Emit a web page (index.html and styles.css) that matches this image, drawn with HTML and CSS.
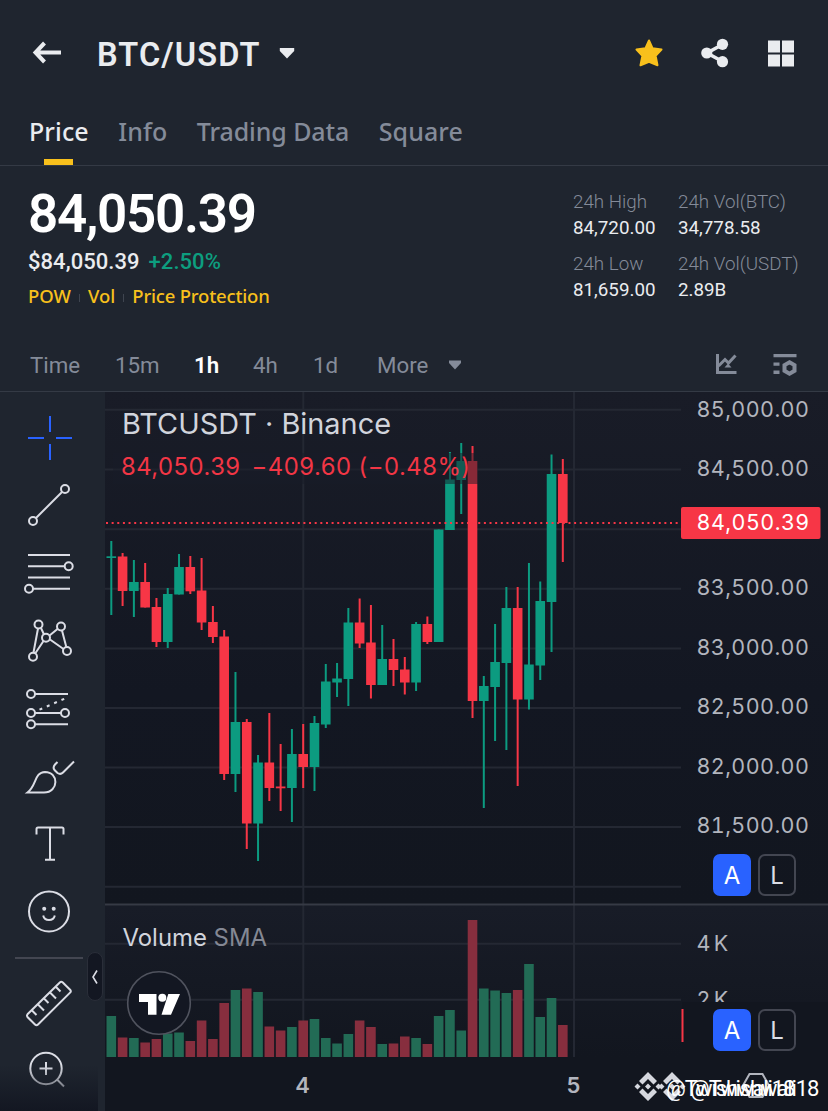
FILE: index.html
```
<!DOCTYPE html>
<html lang="en">
<head>
  <meta charset="UTF-8">
  <meta name="viewport" content="width=device-width, initial-scale=1.0">
  <title>BTC/USDT</title>
  <link rel="stylesheet" href="styles.css">
</head>
<body>
  <header class="topbar">
    <svg class="back" width="30" height="24" viewBox="0 0 30 24"><path d="M12.500 2 3.500 11.500 12.500 21M4 11.500H29" /></svg>
    <h1 class="pair">BTC/USDT</h1>
    <svg class="pair-caret" width="16" height="12" viewBox="0 0 16 12"><path d="M0.800 1H15.200V4L8 11.500 0.800 4Z" /></svg>
    <div class="actions">
      <svg width="30" height="30" viewBox="0 0 30 30"><path class="star" d="M15 2.500 18.500 10.200 27.500 11.500 21.600 17.800 23.500 27.300 15 23.800 6.500 27.300 8.400 17.800 2.500 11.500 11.500 10.200Z" /></svg>
      <svg width="30" height="30" viewBox="0 0 30 30"><path d="M22.500 6.500 7 15 22.500 23.500" fill="none" stroke="#eaecef" stroke-width="3.500" /><g fill="#eaecef"><circle cx="22.500" cy="6.300" r="5.600" /><circle cx="6.800" cy="15" r="5.600" /><circle cx="22.500" cy="23.700" r="5.600" /></g></svg>
      <svg width="30" height="30" viewBox="0 0 30 30"><path fill="#eaecef" d="M2 2.500h12v12H2zM16 2.500h12v12H16zM2 16.500h12v12H2zM16 16.500h12v12H16z" /></svg>
    </div>
  </header>

  <nav class="tabs">
    <a class="tab active">Price</a>
    <a class="tab">Info</a>
    <a class="tab tab-data">Trading Data</a>
    <a class="tab">Square</a>
  </nav>

  <section class="summary">
    <div class="quote">
      <div class="last-price">84,050.39</div>
      <div class="fiat"><span>$84,050.39</span><span class="change">+2.50%</span></div>
      <div class="tags"><span>POW</span><i></i><span>Vol</span><i></i><span class="tag-protect">Price Protection</span></div>
    </div>
    <dl class="stats">
      <div><dt>24h High</dt><dd>84,720.00</dd></div>
      <div><dt>24h Vol(BTC)</dt><dd>34,778.58</dd></div>
      <div><dt>24h Low</dt><dd>81,659.00</dd></div>
      <div><dt>24h Vol(USDT)</dt><dd>2.89B</dd></div>
    </dl>
  </section>

  <div class="intervals">
    <span class="iv-time">Time</span>
    <span class="iv-15m">15m</span>
    <span class="iv-1h active">1h</span>
    <span class="iv-4h">4h</span>
    <span class="iv-1d">1d</span>
    <span class="iv-more">More</span>
    <svg class="more-caret" width="14" height="10" viewBox="0 0 14 10"><path d="M1 0.500H13V3L7 9.500 1 3Z" /></svg>
    <svg class="indicator" width="24" height="24" viewBox="0 0 24 24"><path d="M3.500 1V19.500H22.500M4.500 13 11 6.500 14.500 10 21.500 2.500" fill="none" stroke="#848b99" stroke-width="3" /><path d="M14 10.500 17.500 14.500H10.500Z" fill="#848b99" /></svg>
    <svg class="settings" width="26" height="24" viewBox="0 0 26 24"><path fill="#848b99" d="M1.500 1h23v3.200h-23zM1.500 9.500h6v3.200h-6zM1.500 17.500h6v3.500h-6z" /><path fill="none" stroke="#848b99" stroke-width="4" d="M17.500 9.200 22.500 12.100V17.800L17.500 20.700 12.500 17.800V12.100Z" /></svg>
  </div>

  <main class="workspace">
    <aside class="tools">
      <svg class="tool cross" viewBox="0 0 98 68"><path d="M50 12V28M50 40V56M28 34H44M56 34H72" /></svg>
      <svg class="tool" viewBox="0 0 98 68"><path d="M36 46 62 20" /><circle cx="65" cy="17" r="4" /><circle cx="33" cy="49" r="4" /></svg>
      <svg class="tool" viewBox="0 0 98 68"><path d="M28 15H70M28 26.200H64.500M28 37.500H70M33 48.700H70" /><circle cx="68.700" cy="26.200" r="4" /><circle cx="29" cy="48.700" r="4" /></svg>
      <svg class="tool" viewBox="0 0 98 68"><path d="M38 20.500 33.500 44.500M41 20 44 26.500M49.500 27.500 57.500 21M62 22.500 66.300 39M50 31.500 63.500 41M43.500 33 35.500 45" /><circle cx="38.500" cy="16.500" r="4" /><circle cx="61" cy="18.500" r="4" /><circle cx="46" cy="29.700" r="4" /><circle cx="67" cy="43" r="4" /><circle cx="33" cy="48.700" r="4" /></svg>
      <svg class="tool" viewBox="0 0 98 68"><path d="M35 18H68M35 37H61M35 48.200H68" /><path d="M39.500 33.700 66 22" stroke-dasharray="3 5" /><circle cx="31" cy="18" r="4" /><circle cx="31" cy="37" r="4" /><circle cx="65" cy="37" r="4" /><circle cx="31" cy="48.200" r="4" /></svg>
      <svg class="tool" viewBox="0 0 98 68"><path d="M27.500 48.500C37 41 34 28.500 45 28 59 28 59 48.500 44 48.500ZM57.500 18 55 20.500Q52.500 23.500 54.500 26L57.500 29Q60.500 31 63 28.500L74 17.500" /></svg>
      <svg class="tool" viewBox="0 0 98 68"><path d="M36.500 22.500V17Q36.500 15.500 38 15.500H62Q63.500 15.500 63.500 17V22.500M50 15.500V47.700M45 47.700H55" /></svg>
      <svg class="tool" viewBox="0 0 98 68"><circle cx="49" cy="31.500" r="20" /><path d="M43.200 35.500C44.500 41.500 53.500 41.500 54.800 35.500" /><circle class="dot" cx="44.200" cy="28.800" r="2" /><circle class="dot" cx="53.700" cy="28.800" r="2" /></svg>
      <hr class="tool-divider">
      <svg class="tool" viewBox="0 0 98 68"><path d="M59.800 12.500Q61.300 11 62.800 12.500L70.300 20Q71.300 21.200 70.300 22.400L38 54.500Q36.500 56 35 54.500L27.500 47Q26.500 45.500 27.500 44.300ZM32 40.500 36.500 45M38 34.500 44 40.500M44 28.500 48.500 33M50 22.500 56 28.500M56 17 60.500 21.500" /></svg>
      <svg class="tool last" viewBox="0 0 98 68"><circle cx="46" cy="32.500" r="15.700" /><path d="M39.500 32.500H52.500M46 26V39M57 43.500 64 50.500" /></svg>
      <div class="tools-fade"></div>
      <div class="collapse"><svg width="8" height="16" viewBox="0 0 8 16"><path d="M6 1.500 2 8 6 14.500" /></svg></div>
    </aside>

    <section class="chart">
      <svg class="plot" viewBox="105 392 723 719">
        <g id="grid"></g>
        <g id="volume"></g>
        <g id="candles"></g>
        <rect class="veil" x="113" y="453" width="365" height="31" />
        <path class="last-line" d="M106 523H681" />
        <path class="pane-line" d="M105 904.500H828" />
        <g id="prices" class="axis"></g>
        <g class="axis">
          <text x="696.500" y="951">4<tspan dx="3">K</tspan></text>
          <text x="696.500" y="1007">2<tspan dx="3">K</tspan></text>
        </g>
        <rect class="axis-cover" x="682" y="1002" width="146" height="109" />
        <path class="vol-mark" d="M682.500 1009V1042" />
        <rect class="last-tag" x="681" y="507" width="139.500" height="32" rx="2" />
        <text class="last-text" x="696.500" y="530">84,050.39</text>
        <g class="days"><text x="302.500" y="1093">4</text><text x="573.500" y="1093">5</text></g>
        <g class="tv">
          <circle cx="159" cy="1003" r="31.300" />
          <path d="M139 994H156.500V1014.700H148V1002H139ZM168.300 994H180L171 1014.700H161.500Z" />
          <circle class="tv-dot" cx="162.300" cy="997.700" r="4" />
        </g>
        <g class="watermark">
          <g id="diamond"><path d="M639 1081 648 1072 657 1081 653.500 1084.500 648 1079 642.500 1084.500ZM639 1092 648 1101 657 1092 653.500 1088.500 648 1094 642.500 1088.500ZM648 1083.500 651 1086.500 648 1089.500 645 1086.500ZM637.500 1083.500 640.500 1086.500 637.500 1089.500 634.500 1086.500ZM658.500 1083.500 661.500 1086.500 658.500 1089.500 655.500 1086.500Z" /></g>
          <use href="#diamond" x="24" />
          <path class="hex" d="M749.500 1074H762.500L769 1085.500 762.500 1097H749.500L743 1085.500Z" />
          <text x="666" y="1096">@Twishwali18</text>
          <text x="690" y="1096">@Twishwali18</text>
        </g>
      </svg>
      <div class="legend">
        <div class="symbol">BTCUSDT · Binance</div>
        <div class="values"><span>84,050.39</span><span>−409.60 (−0.48%)</span></div>
      </div>
      <div class="volume-legend">Volume <span>SMA</span></div>
      <div class="scale-buttons upper"><b>A</b><b>L</b></div>
      <div class="scale-buttons lower"><b>A</b><b>L</b></div>
    </section>
  </main>

  <script src="chart.js"></script>
</body>
</html>
```
FILE: styles.css
```
* {
  box-sizing: border-box;
}
body {
  margin: 0;
  width: 828px;
  height: 1111px;
  overflow: hidden;
  background: #1f252f;
  color: #eaecef;
  font-family: Roboto, "Liberation Sans", sans-serif;
}
svg {
  display: block;
  flex: none;
}

/* header */
.topbar {
  display: flex;
  align-items: center;
  height: 106px;
  padding: 0 32px;
}
.back {
  fill: none;
  stroke: #eaecef;
  stroke-width: 4;
}
.pair {
  width: 163px;
  margin: 4px 0 0 35px;
  font-size: 32.5px;
  font-weight: 600;
  letter-spacing: 1.1px;
  white-space: nowrap;
}
.pair-caret {
  margin-left: 19px;
  fill: #eaecef;
}
.actions {
  display: flex;
  gap: 36px;
  margin-left: auto;
}
.star {
  fill: #f8c01c;
  stroke: #f8c01c;
  stroke-width: 2;
  stroke-linejoin: round;
}

/* tabs */
.tabs {
  display: flex;
  gap: 29.5px;
  height: 60px;
  padding-left: 29px;
  border-bottom: 1px solid #343a45;
  font-family: "Noto Sans", sans-serif;
  font-size: 25px;
  font-weight: 500;
  line-height: 50px;
  color: #848b99;
}
.tab {
  position: relative;
  letter-spacing: 0.1px;
  white-space: nowrap;
}
.tab-data {
  letter-spacing: -0.1px;
}
.tab.active {
  color: #eaecef;
}
.tab.active::after {
  content: "";
  position: absolute;
  left: 15px;
  bottom: 0;
  width: 29px;
  height: 6px;
  background: #f8c01c;
}

/* price summary */
.summary {
  display: flex;
  justify-content: space-between;
  height: 172px;
  padding: 20px 27px 0 28px;
}
.last-price {
  font-size: 53px;
  font-weight: 600;
  letter-spacing: -1.3px;
  line-height: 56px;
  color: #fff;
}
.fiat {
  display: flex;
  gap: 9px;
  margin-top: 7px;
  font-size: 22px;
  font-weight: 500;
  letter-spacing: 0.05px;
  line-height: 26px;
}
.change {
  color: #0d9e7f;
}
.tags {
  display: flex;
  align-items: center;
  margin-top: 8px;
  font-family: "Noto Sans", sans-serif;
  font-size: 18.5px;
  font-weight: 500;
  line-height: 26px;
  color: #f8c01c;
}
.tags i {
  width: 1px;
  height: 8px;
  margin: 3px 8px 0;
  background: #3f4550;
}
.tag-protect {
  letter-spacing: -0.2px;
}
.stats {
  display: grid;
  grid-template-columns: 105px 123px;
  grid-auto-rows: 62px;
  margin: 3px 0 0;
  font-size: 18.8px;
  line-height: 26px;
  white-space: nowrap;
}
.stats dt {
  color: #848b99;
  font-weight: 300;
}
.stats dd {
  margin: 0;
}

/* interval bar */
.intervals {
  display: flex;
  align-items: center;
  height: 54px;
  padding-left: 30px;
  border-bottom: 1px solid #343a45;
  font-size: 22.3px;
  color: #848b99;
}
.intervals .active {
  color: #fff;
  font-weight: 600;
}
.intervals span {
  flex: none;
}
.iv-time {
  width: 85px;
}
.iv-15m {
  width: 79px;
}
.iv-1h {
  width: 59px;
}
.iv-4h {
  width: 60px;
}
.iv-1d {
  width: 64px;
}
.iv-more {
  width: 71px;
}
.more-caret {
  fill: #848b99;
}
.indicator {
  margin-left: 252px;
}
.settings {
  margin-left: 34px;
}

/* chart area */
.workspace {
  display: flex;
  height: 719px;
}
.tools {
  position: relative;
  flex: none;
  width: 105px;
  padding-top: 12px;
}
.tool {
  width: 98px;
  height: 68px;
  fill: none;
  stroke: #dbdde5;
  stroke-width: 2;
}
.tool.cross {
  stroke: #2962ff;
}
.tool.last {
  margin-top: -2px;
}
.tool .dot {
  fill: #dbdde5;
  stroke: none;
}
.tool-divider {
  width: 68px;
  height: 2px;
  margin: 9px 0 11px 15px;
  border: 0;
  background: #434651;
}
.tools-fade {
  position: absolute;
  left: 0;
  bottom: 0;
  width: 98px;
  height: 46px;
  background: linear-gradient(rgba(19, 23, 34, 0), #131722);
}
.collapse {
  position: absolute;
  left: 87px;
  top: 560px;
  display: flex;
  align-items: center;
  justify-content: center;
  width: 16px;
  height: 49px;
  border: 1px solid #2a2e39;
  border-radius: 8px;
  background: #131722;
}
.collapse svg {
  fill: none;
  stroke: #dbdde5;
  stroke-width: 1.6;
}
.chart {
  position: relative;
  width: 723px;
  height: 719px;
  background: linear-gradient(#191c27, #131722 300px, #12161f 512px, #181c27 514px, #12161f 665px);
  font-family: Inter, "Liberation Sans", sans-serif;
}
.plot {
  width: 723px;
  height: 719px;
}
.grid-line {
  stroke: #242833;
  stroke-width: 2;
}
.up {
  fill: #0c9b80;
}
.down {
  fill: #f73646;
}
.vol-up {
  fill: #226b55;
}
.vol-down {
  fill: #872e3e;
}
.veil {
  fill: #181c27;
  opacity: 0.5;
}
.last-line {
  stroke: #f73646;
  stroke-width: 2;
  stroke-dasharray: 2 3.640;
}
.pane-line {
  stroke: #363a45;
  stroke-width: 2;
}
.axis text {
  fill: #b2b5be;
  font-size: 21.5px;
  font-variant-numeric: tabular-nums;
  letter-spacing: 0.4px;
}
.axis-cover {
  fill: #12161f;
}
.vol-mark {
  stroke: #f73646;
  stroke-width: 2;
}
.last-tag {
  fill: #f73646;
}
.last-text {
  fill: #fff;
  font-size: 21.5px;
  font-variant-numeric: tabular-nums;
  letter-spacing: 0.45px;
}
.days {
  fill: #b2b5be;
  font-size: 22px;
  font-weight: 600;
  text-anchor: middle;
}
.tv circle {
  fill: #131722;
  stroke: #50535e;
  stroke-width: 1.6;
}
.tv path,
.tv .tv-dot {
  fill: #fff;
  stroke: none;
}
.watermark {
  fill: #d5d7de;
}
.watermark text {
  fill: #fff;
  font-family: Roboto, "Liberation Sans", sans-serif;
  font-size: 22px;
  letter-spacing: -1.1px;
}
.watermark .hex {
  fill: none;
  stroke: #b2b5be;
  stroke-width: 2;
}
.legend {
  position: absolute;
  left: 16px;
  top: 13px;
  white-space: nowrap;
}
.symbol {
  padding-left: 1px;
  color: #d1d4dc;
  font-size: 28.9px;
  line-height: 38px;
}
.values {
  display: flex;
  gap: 11px;
  margin-top: 8px;
  font-size: 23.8px;
  letter-spacing: 0.5px;
  line-height: 32px;
  color: #f23645;
}
.volume-legend {
  position: absolute;
  left: 17.5px;
  top: 530px;
  font-size: 23.9px;
  line-height: 32px;
  color: #d1d4dc;
}
.volume-legend span {
  color: #848894;
}
.scale-buttons {
  position: absolute;
  left: 608px;
  display: flex;
  gap: 7px;
}
.scale-buttons.upper {
  top: 462px;
}
.scale-buttons.lower {
  top: 617px;
}
.scale-buttons b {
  width: 38px;
  height: 42px;
  border: 2px solid #434651;
  border-radius: 7px;
  font-size: 24px;
  font-weight: 400;
  line-height: 39px;
  text-align: center;
  color: #dbdde5;
}
.scale-buttons b:first-child {
  border-color: #2962ff;
  background: #2962ff;
  color: #fff;
}
```
FILE: chart.js
```
// [direction, body top, body bottom, wick top, wick bottom, volume top]
const bars = [
  [1, 556.3, 558, 541, 615, 1016], [0, 556.5, 591, 553, 606, 1037.5], [1, 582, 591, 560, 617, 1038],
  [0, 582, 607.5, 563, 607.5, 1042.5], [0, 607, 642, 598, 647, 1039], [1, 594, 642, 588, 648, 1033.5],
  [1, 567, 594.5, 554, 594.5, 1032.5], [0, 567, 591.3, 556, 594, 1041], [0, 590.5, 622.5, 558, 630, 1020.5],
  [0, 622, 637, 606, 643, 1039], [0, 636.5, 774, 630, 780, 1003], [1, 722, 774, 672, 792, 990],
  [0, 722, 823.5, 719, 849, 988.5], [1, 762.5, 823.5, 755, 861, 992], [0, 762.5, 788, 713, 801, 1026.5],
  [0, 786.5, 788.3, 744, 811, 1030.5], [1, 754, 788, 729, 822, 1027], [0, 754, 767, 724, 788, 1020.5],
  [1, 723, 767, 716, 791, 1019], [1, 681.5, 724.5, 664, 728, 1038], [1, 678.5, 682.5, 663, 697, 1043.5],
  [1, 622.5, 679, 608, 706, 1034], [0, 622.5, 643.5, 598.5, 648, 1020.5], [0, 642.5, 685, 605, 698.5, 1027],
  [1, 659, 685, 625, 685, 1044], [0, 659, 670, 639, 686, 1043.5], [0, 669.5, 682.5, 657, 694.5, 1036.5],
  [1, 624, 682.5, 622, 691, 1038], [0, 624, 642, 616.5, 644, 1044], [1, 529.5, 642, 529.5, 642, 1016],
  [1, 479.5, 530, 452, 530, 1010], [1, 461, 480, 443, 514, 1030.5], [0, 461, 701, 446, 718, 920],
  [1, 686, 701, 676, 808, 988.5], [1, 662, 687, 624, 741, 990.5], [1, 608, 663, 587, 750, 993],
  [0, 608, 699.5, 587, 786, 990], [1, 664.5, 699.5, 563, 709.5, 964], [1, 601, 665.5, 581.5, 680, 1017],
  [1, 474, 602, 454.5, 652, 998], [0, 474, 523, 459, 562, 1025]
];

const ns = 'http://www.w3.org/2000/svg';

function add(parent, tag, attrs) {
  const el = document.createElementNS(ns, tag);
  for (const key in attrs) el.setAttribute(key, attrs[key]);
  document.getElementById(parent).appendChild(el);
  return el;
}

[409.7, 469.4, 529.2, 588.8, 648.5, 708, 767.5, 827, 886.8, 943.7, 999.7].forEach(y => {
  add('grid', 'path', { class: 'grid-line', d: `M105 ${y}H681` });
});
[303.3, 574].forEach(x => {
  add('grid', 'path', { class: 'grid-line', d: `M${x} 392V1057` });
});

bars.forEach(([up, top, bottom, high, low, vol], i) => {
  const x = 111.3 + i * 11.288;
  add('candles', 'rect', { class: up ? 'up' : 'down', x: x - 1, y: high, width: 2, height: low - high });
  add('candles', 'rect', { class: up ? 'up' : 'down', x: x - 4.8, y: top, width: 9.6, height: bottom - top });
  add('volume', 'rect', { class: up ? 'vol-up' : 'vol-down', x: x - 4.8, y: vol, width: 9.6, height: 1057 - vol });
});

const labels = { '85,000.00': 409, '84,500.00': 468, '83,500.00': 587, '83,000.00': 647, '82,500.00': 706.5, '82,000.00': 766, '81,500.00': 825.5 };
for (const price in labels) {
  add('prices', 'text', { x: 696.5, y: labels[price] + 7.5 }).textContent = price;
}
```
